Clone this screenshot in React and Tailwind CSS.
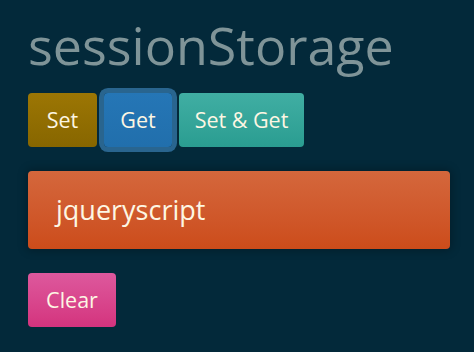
import React from "react";

export default function App() {
  return (
    <div
      className="w-[474px] h-[352px] overflow-hidden bg-[#03293a] pl-[28px] pr-[24px] pt-[18px]"
      style={{ fontFamily: '"Open Sans", "Noto Sans", sans-serif' }}
    >
      <h1 className="text-[52px] leading-[54px] text-[#7f9498] font-normal">
        sessionStorage
      </h1>
      <div className="mt-[21px] flex items-center gap-[7px]">
        <button className="w-[69px] h-[54px] rounded-[4px] bg-gradient-to-b from-[#9c7604] to-[#876600] text-[21.5px] text-[#fdf6e3]">
          Set
        </button>
        <button className="w-[68px] h-[54px] rounded-[4px] bg-gradient-to-b from-[#2576b6] to-[#216fac] text-[21.5px] text-[#fdf6e3] shadow-[0_0_0_5px_#29658f]">
          Get
        </button>
        <button className="w-[125px] h-[54px] rounded-[4px] bg-gradient-to-b from-[#40aea3] to-[#2a9d91] text-[21.5px] text-[#fdf6e3]">
          Set &amp; Get
        </button>
      </div>
      <div className="mt-[24px] h-[78px] w-[422px] rounded-[4px] bg-gradient-to-b from-[#d4673c] to-[#cc4c1a] flex items-center pl-[28px] text-[27px] text-[#fdf6e3] shadow-[0_0_8px_2px_rgba(0,0,0,0.25)]">
        jqueryscript
      </div>
      <button className="mt-[24px] block w-[88px] h-[54px] rounded-[4px] bg-gradient-to-b from-[#dd589d] to-[#d4337e] text-[21.5px] text-[#fdf6e3]">
        Clear
      </button>
    </div>
  );
}
